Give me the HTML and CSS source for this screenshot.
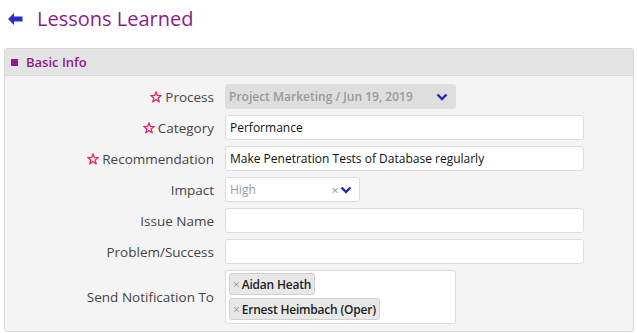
FILE: index.html
```html
<!DOCTYPE html>
<html lang="en">
<head>
    <meta charset="UTF-8">
    <title>Lessons Learned</title>
    <link rel="stylesheet" href="styles.css">
</head>
<body>
    <header class="page-title">
        <a href="#" class="back" aria-label="Back">
            <svg width="15" height="12" viewBox="0 0 15 12"><path d="M0 6 L6 0 L6 3.5 L14.5 3.5 L14.5 8.5 L6 8.5 L6 12 Z" fill="#1f2fd4"/></svg>
        </a>
        <h1>Lessons Learned</h1>
    </header>

    <section class="panel">
        <div class="panel-head">
            <span class="square"></span>
            <h2>Basic Info</h2>
        </div>
        <div class="panel-body">
            <div class="row">
                <label><svg class="star" width="12" height="12" viewBox="0 0 12 12"><path d="M6 0.8 L7.3 4.5 L11.3 4.6 L8.1 7 L9.3 10.9 L6 8.6 L2.7 10.9 L3.9 7 L0.7 4.6 L4.7 4.5 Z" fill="none" stroke="#ee1b68" stroke-width="1.2" stroke-linejoin="round"/></svg>Process</label>
                <div class="select disabled">
                    <span class="value">Project Marketing / Jun 19, 2019</span>
                    <svg class="chev" width="12" height="8" viewBox="0 0 12 8"><path d="M1.5 1.5 L6 6 L10.5 1.5" fill="none" stroke="#1c2bb8" stroke-width="2.4"/></svg>
                </div>
            </div>
            <div class="row">
                <label><svg class="star" width="12" height="12" viewBox="0 0 12 12"><path d="M6 0.8 L7.3 4.5 L11.3 4.6 L8.1 7 L9.3 10.9 L6 8.6 L2.7 10.9 L3.9 7 L0.7 4.6 L4.7 4.5 Z" fill="none" stroke="#ee1b68" stroke-width="1.2" stroke-linejoin="round"/></svg>Category</label>
                <input type="text" value="Performance">
            </div>
            <div class="row">
                <label><svg class="star" width="12" height="12" viewBox="0 0 12 12"><path d="M6 0.8 L7.3 4.5 L11.3 4.6 L8.1 7 L9.3 10.9 L6 8.6 L2.7 10.9 L3.9 7 L0.7 4.6 L4.7 4.5 Z" fill="none" stroke="#ee1b68" stroke-width="1.2" stroke-linejoin="round"/></svg>Recommendation</label>
                <input type="text" value="Make Penetration Tests of Database regularly">
            </div>
            <div class="row">
                <label>Impact</label>
                <div class="select impact">
                    <span class="value">High</span>
                    <span class="clear">&times;</span>
                    <svg class="chev" width="12" height="8" viewBox="0 0 12 8"><path d="M1.5 1.5 L6 6 L10.5 1.5" fill="none" stroke="#1c2bb8" stroke-width="2.4"/></svg>
                </div>
            </div>
            <div class="row">
                <label>Issue Name</label>
                <input type="text">
            </div>
            <div class="row">
                <label>Problem/Success</label>
                <input type="text">
            </div>
            <div class="row">
                <label>Send Notification To</label>
                <div class="tags">
                    <span class="tag"><span class="x">&times;</span>Aidan Heath</span>
                    <span class="tag"><span class="x">&times;</span>Ernest Heimbach (Oper)</span>
                </div>
            </div>
        </div>
    </section>
</body>
</html>
```

FILE: styles.css
```css
body {
    font-family: 'Open Sans', 'Noto Sans', sans-serif;
    margin: 0;
    padding: 0 3px 0 4px;
    background-color: #fff;
    color: #333;
    font-size: 13px;
}
.page-title {
    display: flex;
    align-items: center;
    height: 36px;
    margin-bottom: 12px;
}
.back {
    display: flex;
    margin: 1px 0 0 4px;
}
h1 {
    margin: 0 0 0 14px;
    font-size: 20px;
    font-weight: normal;
    color: #8e1a8c;
}
.panel {
    border: 1px solid #d6d6d6;
    border-radius: 3px;
    background-color: #f4f4f4;
}
.panel-head {
    display: flex;
    align-items: center;
    height: 26px;
    background-color: #e3e3e3;
    border-bottom: 1px solid #d9d9d9;
    padding-left: 6px;
}
.square {
    width: 7px;
    height: 7px;
    background-color: #8e1a8c;
    margin-right: 8px;
}
h2 {
    margin: 0;
    font-size: 13px;
    font-weight: 600;
    color: #8e1a8c;
}
.panel-body {
    display: flex;
    flex-direction: column;
    gap: 6px;
    padding: 8px 0 7px;
}
.row {
    display: grid;
    grid-template-columns: 209px 359px;
    column-gap: 11px;
    align-items: center;
}
label {
    display: flex;
    justify-content: flex-end;
    align-items: center;
    font-size: 13.5px;
    color: #444;
}
.star {
    margin-right: 3px;
}
input {
    height: 25px;
    box-sizing: border-box;
    border: 1px solid #dcdcdc;
    border-radius: 3px;
    background-color: #fff;
    font: inherit;
    font-size: 12px;
    color: #111;
    padding: 0 4px;
}
.select {
    display: flex;
    align-items: center;
    height: 25px;
    box-sizing: border-box;
    border-radius: 3px;
    padding: 0 4px;
    font-size: 12px;
}
.select .value {
    flex: 1;
}
.select.disabled {
    width: 231px;
    background-color: #dedede;
    color: #999;
    font-weight: 600;
}
.select.disabled .chev {
    margin-right: 4px;
}
.select.impact {
    width: 135px;
    background-color: #fff;
    border: 1px solid #dcdcdc;
    color: #999;
}
.clear {
    color: #999;
    font-size: 13px;
    margin-right: 1px;
}
.impact .chev {
    margin-right: 3px;
}
.tags {
    width: 231px;
    box-sizing: border-box;
    display: flex;
    flex-direction: column;
    align-items: flex-start;
    gap: 3px;
    padding: 2px 3px 3px;
    background-color: #fff;
    border: 1px solid #dcdcdc;
    border-radius: 3px;
}
.tag {
    display: flex;
    align-items: center;
    height: 22px;
    box-sizing: border-box;
    padding: 0 3px;
    background-color: #e8e8e8;
    border: 1px solid #d0d0d0;
    border-radius: 3px;
    font-size: 12px;
    font-weight: 600;
    letter-spacing: -0.2px;
    color: #222;
}
.tag .x {
    color: #999;
    font-weight: normal;
    margin-right: 2px;
}
```
